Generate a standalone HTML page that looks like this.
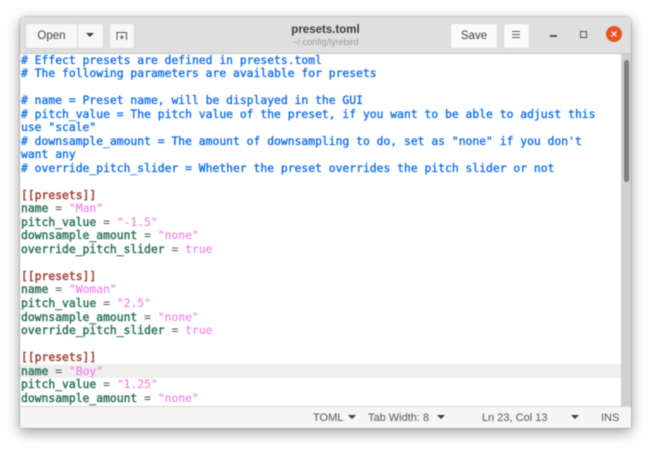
<!DOCTYPE html>
<html><head><meta charset="utf-8">
<style>
html,body{margin:0;padding:0;background:#fff;width:651px;height:450px;overflow:hidden}
#win{position:absolute;left:20px;top:17px;width:611px;height:411px;background:#fff;border-radius:5px 5px 0 0;box-shadow:0 0 2px #888,0 4px 14px rgba(0,0,0,.4);overflow:hidden;filter:blur(.45px)}
#hb{position:absolute;left:0;top:0;width:611px;height:36px;background:#dfdfdf;border-bottom:1px solid #c8c8c8}
.b{position:absolute;top:6px;height:24px;background:#f7f7f7;border:1px solid #d6d6d6;border-radius:3px;font:11.5px "Liberation Sans",sans-serif;color:#3d3d3d;line-height:24px;text-align:center;box-sizing:content-box}
#ed{position:absolute;left:0;top:37px;width:601px;height:352px;overflow:hidden;background:#fff}
pre{margin:0;position:absolute;left:1px;top:-.3px;font:normal 11.36px/13.52px "DejaVu Sans Mono",monospace;-webkit-text-stroke:.3px currentColor;color:#0a6cf0;white-space:pre}
.h{color:#a23f39;-webkit-text-stroke:.45px currentColor}.k{color:#2f7558;-webkit-text-stroke:.45px currentColor}.s{color:#ee7cee;-webkit-text-stroke:.1px currentColor}.o{color:#555;-webkit-text-stroke:0}
#cur{position:absolute;left:0;top:310px;width:601px;height:13.5px;background:#eeeeec}
#sb{position:absolute;left:601px;top:37px;width:10px;height:352px;background:#d0d0d0}
#th{position:absolute;left:3px;top:6px;width:5px;height:122px;border-radius:3px;background:#7f7f7f}
#st{position:absolute;left:0;top:389px;width:611px;height:22px;background:#f6f5f4;border-top:1px solid #d5d5d5;box-sizing:border-box;font:11px/22px "Liberation Sans",sans-serif;color:#555}
#st span{position:absolute;top:0}
.tri{position:absolute;width:0;height:0;border-left:4px solid transparent;border-right:4px solid transparent;border-top:4px solid #3d3d3d}
</style></head><body>
<div id="win">
<div id="hb">
<div class="b" style="left:5px;width:51px;border-radius:3px 0 0 3px;color:#444">Open</div>
<div class="b" style="left:57px;width:25px;border-radius:0 3px 3px 0"></div>
<div class="tri" style="left:66px;top:16px"></div>
<div class="b" style="left:89px;width:24px"></div>
<svg style="position:absolute;left:96px;top:13px" width="12" height="12" fill="none" stroke="#555" stroke-width="1"><path d="M1 10V2.5H10.5V10M5.8 5V9.5M3.8 7.2H7.8"/></svg>
<div style="position:absolute;left:0;width:611px;text-align:center;top:6px;font:bold 11.5px/14px 'Liberation Sans',sans-serif;color:#3d3d3d">presets.toml</div>
<div style="position:absolute;left:0;width:611px;text-align:center;top:20px;font:9px/11px 'Liberation Sans',sans-serif;color:#999">~/.config/lyrebird</div>
<div class="b" style="left:430px;width:46px;background:#fafafa;font-weight:normal">Save</div>
<div class="b" style="left:483px;width:25px;background:#fafafa"></div>
<svg style="position:absolute;left:490px;top:12px" width="11" height="11" stroke="#555" stroke-width="1"><path d="M2 2.5H10M2 5.5H10M2 8.5H10"/></svg>
<div style="position:absolute;left:530px;top:18px;width:7px;height:1.5px;background:#555"></div>
<div style="position:absolute;left:560px;top:14px;width:5px;height:5px;border:1px solid #555"></div>
<div style="position:absolute;left:586px;top:9px;width:16px;height:16px;border-radius:50%;background:#e95420"></div>
<svg style="position:absolute;left:590px;top:13px" width="8" height="8" stroke="#fff" stroke-width="1.2"><path d="M1.5 1.5L6.5 6.5M6.5 1.5L1.5 6.5"/></svg>
</div>
<div id="ed"><div id="cur"></div>
<pre># Effect presets are defined in presets.toml
# The following parameters are available for presets

# name = Preset name, will be displayed in the GUI
# pitch_value = The pitch value of the preset, if you want to be able to adjust this
use "scale"
# downsample_amount = The amount of downsampling to do, set as "none" if you don't
want any
# override_pitch_slider = Whether the preset overrides the pitch slider or not

<span class="h">[[presets]]</span>
<span class="k">name</span> <span class="o">=</span> <span class="s">"Man"</span>
<span class="k">pitch_value</span> <span class="o">=</span> <span class="s">"-1.5"</span>
<span class="k">downsample_amount</span> <span class="o">=</span> <span class="s">"none"</span>
<span class="k">override_pitch_slider</span> <span class="o">=</span> <span class="s">true</span>

<span class="h">[[presets]]</span>
<span class="k">name</span> <span class="o">=</span> <span class="s">"Woman"</span>
<span class="k">pitch_value</span> <span class="o">=</span> <span class="s">"2.5"</span>
<span class="k">downsample_amount</span> <span class="o">=</span> <span class="s">"none"</span>
<span class="k">override_pitch_slider</span> <span class="o">=</span> <span class="s">true</span>

<span class="h">[[presets]]</span>
<span class="k">name</span> <span class="o">=</span> <span class="s">"Boy"</span>
<span class="k">pitch_value</span> <span class="o">=</span> <span class="s">"1.25"</span>
<span class="k">downsample_amount</span> <span class="o">=</span> <span class="s">"none"</span></pre>
</div>
<div id="sb"><div id="th"></div></div>
<div id="st">
<span style="left:293px">TOML</span><div class="tri" style="left:328px;top:8px"></div>
<span style="left:348px">Tab Width: 8</span><div class="tri" style="left:417px;top:8px"></div>
<span style="left:462px">Ln 23, Col 13</span><div class="tri" style="left:551px;top:8px"></div>
<span style="left:581px">INS</span>
</div>
</div>
</body></html>
